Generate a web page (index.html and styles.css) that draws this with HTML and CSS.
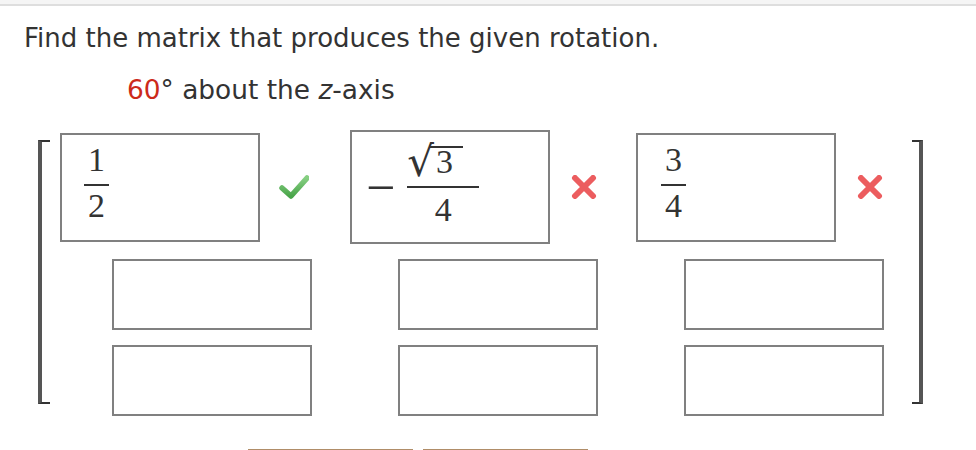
FILE: index.html
```html
<!DOCTYPE html>
<html>
<head>
<meta charset="utf-8">
<link rel="stylesheet" href="styles.css">
</head>
<body>
<div class="topbar"></div>
<div class="content">
  <p class="prompt">Find the matrix that produces the given rotation.</p>
  <p class="spec"><span class="deg">60</span>° about the <i>z</i>-axis</p>
  <div class="matrix">
    <div class="bracket left"></div>
    <div class="grid">
      <div class="cell">
        <div class="box answer shift">
          <span class="frac"><span class="num">1</span><span class="den">2</span></span>
        </div>
        <svg class="icon check" width="30" height="26" viewBox="0 0 30 26"><defs><linearGradient id="g" x1="0" y1="0" x2="0" y2="1"><stop offset="0" stop-color="#86cf82"/><stop offset="1" stop-color="#4aa54a"/></linearGradient></defs><path d="M3 14 L12 22 L28 4" fill="none" stroke="url(#g)" stroke-width="5.5" stroke-linejoin="round" stroke-linecap="round"/></svg>
      </div>
      <div class="cell">
        <div class="box answer tall">
          <span class="minus">−</span>
          <span class="frac wide"><span class="num rad"><span class="radsign">√</span><span class="radbody">3</span></span><span class="den">4</span></span>
        </div>
        <svg class="icon cross" width="26" height="24" viewBox="0 0 26 24"><path d="M4 3 L22 21 M22 3 L4 21" fill="none" stroke="#ec5d5f" stroke-width="6" stroke-linecap="round"/></svg>
      </div>
      <div class="cell">
        <div class="box answer p3">
          <span class="frac"><span class="num">3</span><span class="den">4</span></span>
        </div>
        <svg class="icon cross" width="26" height="24" viewBox="0 0 26 24"><path d="M4 3 L22 21 M22 3 L4 21" fill="none" stroke="#ec5d5f" stroke-width="6" stroke-linecap="round"/></svg>
      </div>
      <div class="cell"><div class="box blank"></div></div>
      <div class="cell"><div class="box blank"></div></div>
      <div class="cell"><div class="box blank"></div></div>
      <div class="cell"><div class="box blank"></div></div>
      <div class="cell"><div class="box blank"></div></div>
      <div class="cell"><div class="box blank"></div></div>
    </div>
    <div class="bracket right"></div>
  </div>
  <div class="buttons"><div class="btn"></div><div class="btn"></div></div>
</div>
</body>
</html>
```
FILE: styles.css
```css
html, body {
  margin: 0;
  padding: 0;
  background: #fff;
}
body {
  font-family: "DejaVu Sans", Verdana, sans-serif;
  color: #333;
  font-size: 26px;
  height: 450px;
  overflow: hidden;
}
.topbar {
  height: 4px;
  background: #f5f5f5;
  border-bottom: 2px solid #dedede;
}
.content {
  padding-left: 24px;
}
.prompt {
  margin: 17px 0 0 0;
  line-height: 30px;
}
.spec {
  margin: 22px 0 0 103px;
  line-height: 30px;
  font-size: 26.4px;
}
.deg {
  color: #cc2a1a;
}
.matrix {
  display: flex;
  margin: 25px 0 0 14px;
}
.bracket {
  width: 8px;
  margin: 10px 0 12px 0;
  border-top: 2px solid #333;
  border-bottom: 2px solid #333;
}
.bracket.left {
  border-left: 4px solid #555;
}
.bracket.right {
  width: 7px;
  border-right: 4px solid #555;
}
.grid {
  margin-left: 14px;
  display: grid;
  grid-template-columns: 286px 286px 276px;
  row-gap: 15px;
}
.cell {
  display: flex;
  align-items: center;
}
.box {
  box-sizing: border-box;
  width: 200px;
  border: 2px solid #808080;
  background: #fff;
}
.box.answer {
  height: 109px;
  display: flex;
  align-items: flex-start;
  padding-top: 8px;
  padding-left: 22px;
  font-family: "Liberation Serif", "Times New Roman", serif;
  font-size: 34px;
  color: #333;
}
.box.shift {
  margin-left: -4px;
}
.box.p3 {
  padding-left: 23px;
}
.box.tall {
  height: 114px;
  padding-top: 14px;
  padding-left: 14px;
}
.box.blank {
  height: 71px;
  margin-left: 48px;
}
.frac {
  display: inline-flex;
  flex-direction: column;
  align-items: center;
}
.frac .num {
  line-height: 33px;
  padding-bottom: 8px;
}
.frac .den {
  line-height: 33px;
  padding: 3px 4px 0 4px;
  border-top: 2px solid #333;
  align-self: stretch;
  text-align: center;
}
.frac.wide {
  width: 72px;
  margin-left: 12px;
}
.frac.wide .den {
  padding: 5px 0 0 0;
}
.num.rad {
  display: flex;
  align-items: flex-end;
  align-self: flex-start;
  padding-bottom: 10px;
  line-height: 28px;
}
.radsign {
  font-family: "DejaVu Serif", serif;
  font-size: 42px;
  line-height: 30px;
  margin-right: -4px;
  position: relative;
  top: 1px;
}
.radbody {
  display: inline-block;
  border-top: 2px solid #333;
  line-height: 28px;
  padding: 0 10px 0 6px;
}
.minus {
  font-family: "Liberation Serif", serif;
  font-size: 52px;
  line-height: 33px;
  margin-top: 25px;
}
.icon {
  flex: none;
  display: block;
}
.check {
  margin-left: 19px;
}
.cross {
  margin-left: 21px;
}
.buttons {
  display: flex;
  gap: 10px;
  margin: 33px 0 0 224px;
}
.btn {
  width: 165px;
  height: 1px;
  border-top: 1px solid #b08d68;
}
```
